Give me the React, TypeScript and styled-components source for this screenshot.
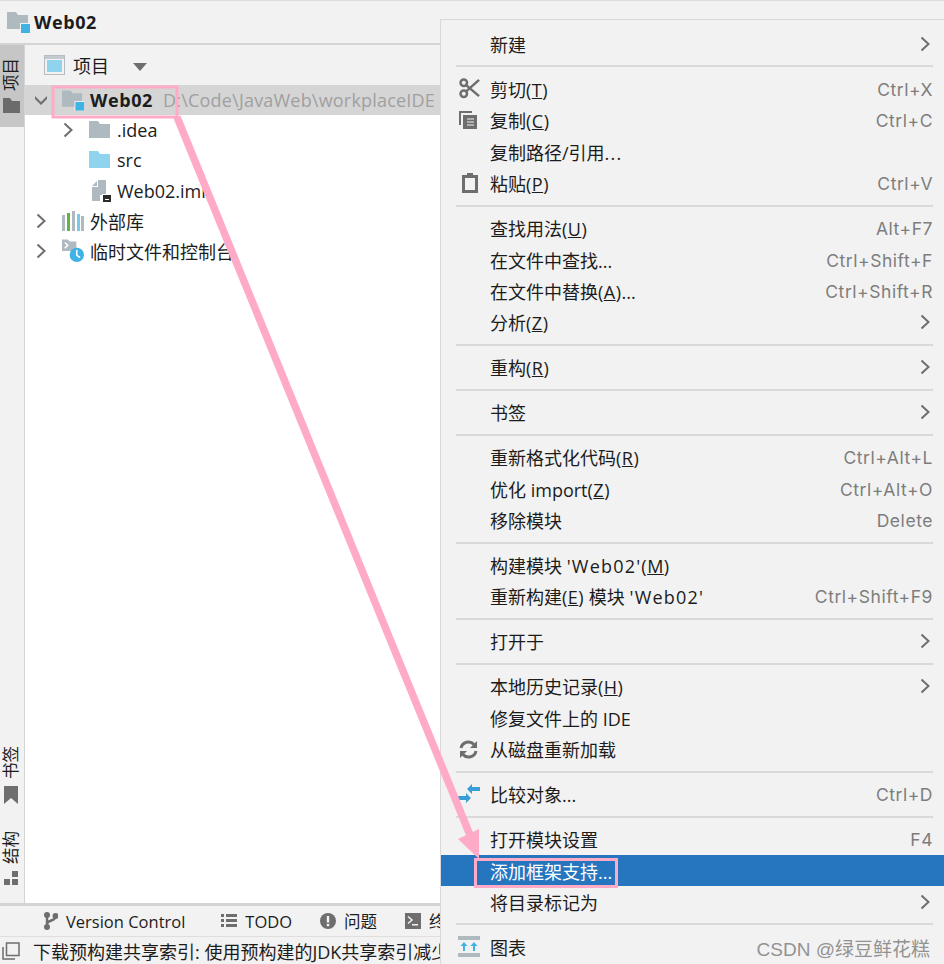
import * as React from 'react'
import styled, { createGlobalStyle } from 'styled-components'

const UI_FONT = `"Open Sans", "Noto Sans CJK SC", sans-serif`

const GlobalStyle = createGlobalStyle`
  html, body {
    margin: 0;
    padding: 0;
    background: #f2f2f2;
  }
  body {
    font-family: ${UI_FONT};
    font-size: 18px;
    color: #1c1c1c;
  }
`

const Page = styled.div`
  position: relative;
  display: flex;
  flex-direction: column;
  width: 944px;
  height: 964px;
  overflow: hidden;
  background: #f2f2f2;
`

const TitleBar = styled.div`
  display: flex;
  align-items: center;
  gap: 4px;
  height: 42px;
  padding-left: 7px;
  border-top: 1px solid #dcdcdc;
  border-bottom: 2px solid #d4d4d4;
  font-weight: 700;
  letter-spacing: 0.6px;
`

const Workspace = styled.div`
  display: flex;
  width: 441px;
  height: 858px;
  overflow: hidden;
`

const SideStrip = styled.div`
  display: flex;
  flex-direction: column;
  justify-content: space-between;
  width: 25px;
  padding-bottom: 3px;
  box-sizing: border-box;
  border-right: 1px solid #d4d4d4;
  flex-shrink: 0;
`

const StripGroup = styled.div`
  display: flex;
  flex-direction: column;
`

const StripTab = styled.div<{ $active?: boolean }>`
  display: flex;
  flex-direction: column;
  align-items: center;
  gap: 7px;
  padding: 13px 2px 14px 0;
  background: ${(p) => (p.$active ? '#c6c6c6' : 'transparent')};
`

const StripLabel = styled.span`
  writing-mode: vertical-rl;
  text-orientation: sideways;
  transform: rotate(180deg);
  font-size: 16.5px;
  line-height: 20px;
`

const ProjectPanel = styled.div`
  flex: 1;
  display: flex;
  flex-direction: column;
  background: #fff;
  min-width: 0;
`

const PanelHeader = styled.div`
  display: flex;
  align-items: center;
  height: 40px;
  padding-left: 19px;
  background: #f2f2f2;
`

const HeaderTitle = styled.span`
  margin-left: 8px;
  margin-right: 24px;
`

const DropArrow = styled.svg`
  margin-top: 3px;
`

const TreeRow = styled.div<{ $selected?: boolean; $indent: number }>`
  display: flex;
  align-items: center;
  height: 30.2px;
  padding-left: ${(p) => 10 + p.$indent * 27}px;
  background: ${(p) => (p.$selected ? '#d5d5d5' : 'transparent')};
  white-space: nowrap;
`

const ChevronSlot = styled.span`
  display: flex;
  justify-content: center;
  width: 12px;
  margin-right: 15px;
  flex-shrink: 0;
`

const TreeIcon = styled.span`
  display: flex;
  align-items: center;
  width: 22px;
  flex-shrink: 0;
`

const TreeLabel = styled.span<{ $bold?: boolean }>`
  margin-left: 6px;
  font-weight: ${(p) => (p.$bold ? 700 : 400)};
  letter-spacing: ${(p) => (p.$bold ? '0.6px' : '0')};
`

const TreePath = styled.span`
  margin-left: 10px;
  color: #a0a0a0;
  letter-spacing: 0.2px;
`

const ToolTabs = styled.div`
  display: flex;
  align-items: center;
  width: 397px;
  height: 30px;
  padding-left: 44px;
  box-sizing: content-box;
  border-top: 3px solid #d4d4d4;
  border-bottom: 1px solid #dedede;
  white-space: nowrap;
  font-size: 16.5px;
  overflow: hidden;
`

const ToolTab = styled.div<{ $gap: number }>`
  display: flex;
  align-items: center;
  gap: 8px;
  flex-shrink: 0;
  margin-right: ${(p) => p.$gap}px;
`

const StatusBar = styled.div`
  display: flex;
  align-items: center;
  gap: 13px;
  flex: 1;
  width: 439px;
  padding-left: 2px;
  white-space: nowrap;
  overflow: hidden;
`

const StatusIcon = styled.svg`
  flex-shrink: 0;
`

const Menu = styled.div`
  position: absolute;
  left: 440px;
  top: 19px;
  width: 504px;
  height: 960px;
  box-sizing: border-box;
  padding-top: 8.3px;
  background: #f2f2f2;
  border-left: 1px solid #d9d9d9;
  border-top: 1px solid #d9d9d9;
`

const MenuRow = styled.div<{ $active?: boolean }>`
  display: flex;
  align-items: center;
  height: 31.4px;
  padding: 0 11px 0 15px;
  background: ${(p) => (p.$active ? '#2675bf' : 'transparent')};
  color: ${(p) => (p.$active ? '#fff' : '#1c1c1c')};
  white-space: nowrap;
`

const MenuIcon = styled.span`
  display: flex;
  align-items: center;
  box-sizing: border-box;
  width: 34px;
  height: 24px;
  padding-left: 3px;
  flex-shrink: 0;
`

const WideIcon = styled.svg`
  margin-left: -1px;
`

const MenuLabel = styled.span`
  white-space: pre;
`

const Shortcut = styled.span`
  margin-left: auto;
  margin-top: 1px;
  color: #7d7d7d;
  font-family: Inter, sans-serif;
  font-size: 17.5px;
  letter-spacing: 0.55px;
`

const SubmenuArrow = styled.span`
  display: flex;
  margin-left: auto;
  margin-right: 2px;
`

const MenuSeparator = styled.div`
  height: 13.6px;
  margin: 0 11px 0 15px;
  display: flex;
  align-items: center;

  &::after {
    content: '';
    flex: 1;
    height: 2px;
    background: #d9d9d9;
  }
`

const Mnemonic = styled.span`
  letter-spacing: 0.5px;
`

const Spaced = styled.span`
  letter-spacing: 1.2px;
`

const Annotation = styled.svg`
  position: absolute;
  left: 0;
  top: 0;
  pointer-events: none;
`

const Watermark = styled.span`
  position: absolute;
  right: 14px;
  top: 934px;
  font-family: 'Liberation Sans', 'Noto Sans CJK SC', sans-serif;
  font-size: 19px;
  color: rgba(120, 120, 120, 0.8);
  white-space: nowrap;
`

const GRAY = '#6e6e6e'
const FOLDER = '#afb9c0'
const BLUE = '#3fb3e3'
const PINK = '#ffabc8'

const Chevron = ({ down, color = GRAY }: { down?: boolean; color?: string }) => (
  <svg width="12" height="16" viewBox="0 0 12 16" fill="none" stroke={color} strokeWidth="2">
    {down ? <path d="M-1 4.5 L6 11.5 L13 4.5" /> : <path d="M2.5 1.5 L9.5 8 L2.5 14.5" />}
  </svg>
)

const Folder = ({ color = FOLDER }: { color?: string }) => (
  <svg width="22" height="18" viewBox="0 0 22 18" fill={color}>
    <path d="M0 0 H9 L11 3 H21 V17 H0 Z" />
  </svg>
)

const ModuleIcon = () => (
  <svg width="23" height="21" viewBox="0 0 23 21">
    <path d="M0 0 H9 L11 3 H21 V17 H0 Z" fill={FOLDER} />
    <rect x="13" y="11" width="10" height="10" fill="#f2f2f2" />
    <rect x="14" y="12" width="9" height="9" fill={BLUE} />
  </svg>
)

const ImlIcon = () => (
  <svg width="22" height="22" viewBox="-3 0 22 22">
    <path d="M6 0 H14 V15 H8 V21 H0 V7 H6 Z" fill={FOLDER} />
    <path d="M5 1 V6 H0 Z" fill={FOLDER} />
    <rect x="10" y="14" width="9" height="8" fill="#fff" />
    <rect x="11" y="15" width="8" height="7" fill="#2b2b2b" />
    <rect x="13" y="19" width="4" height="1" fill="#fff" />
  </svg>
)

const LibraryIcon = () => (
  <svg width="22" height="20" viewBox="0 0 22 20">
    <rect x="0" y="4" width="3" height="16" fill={FOLDER} />
    <rect x="5" y="2" width="3" height="18" fill="#62b543" />
    <rect x="10" y="0" width="3" height="20" fill={FOLDER} />
    <rect x="15" y="3" width="3" height="17" fill={BLUE} opacity="0.7" />
    <rect x="19" y="5" width="3" height="15" fill={FOLDER} />
  </svg>
)

const ScratchIcon = () => (
  <svg width="23" height="24" viewBox="0 0 23 24">
    <path d="M0 0 H6 L8 2 H15 V12 H0 Z" fill={FOLDER} />
    <path d="M3 3 L6 6 L3 9" stroke="#fff" strokeWidth="1.5" fill="none" />
    <circle cx="15.5" cy="16" r="7.5" fill={BLUE} />
    <path d="M15.5 11 V16.5 L19 19" stroke="#fff" strokeWidth="1.6" fill="none" />
  </svg>
)

const ViewIcon = () => (
  <svg width="21" height="20" viewBox="0 0 21 20">
    <rect x="0.5" y="0.5" width="20" height="19" fill="#f2f2f2" stroke="#b4bcc2" />
    <rect x="1" y="1" width="19" height="3" fill="#c4cbd0" />
    <rect x="3" y="5" width="15" height="12" fill="#8fd3ee" />
  </svg>
)

const SideFolder = () => (
  <svg width="17" height="15" viewBox="0 0 17 15" fill="#6b6b6b">
    <path d="M0 0 H7 L9 3 H17 V15 H0 Z" />
  </svg>
)

const BookmarkIcon = () => (
  <svg width="14" height="18" viewBox="0 0 14 18" fill="#6e6e6e">
    <path d="M0 0 H14 V18 L7 12 L0 18 Z" />
  </svg>
)

const StructureIcon = () => (
  <svg width="15" height="15" viewBox="0 0 15 15" fill="#6e6e6e">
    <rect x="8" y="0" width="6" height="6" />
    <rect x="0" y="8" width="6" height="6" />
    <rect x="8" y="8" width="6" height="6" />
  </svg>
)

const BranchIcon = () => (
  <svg width="14" height="18" viewBox="0 0 14 18" fill="none" stroke="#6e6e6e" strokeWidth="2.4">
    <circle cx="3" cy="3" r="1.8" fill="#6e6e6e" />
    <circle cx="3" cy="15" r="1.8" fill="#6e6e6e" />
    <circle cx="11.5" cy="4" r="1.8" fill="#6e6e6e" />
    <path d="M3 3 V15 M11.5 5 C11.5 9 3 8 3 12" />
  </svg>
)

const ListIcon = () => (
  <svg width="16" height="14" viewBox="0 0 16 14" fill="#6e6e6e">
    <rect x="0" y="0" width="3" height="3" />
    <rect x="5" y="0" width="11" height="3" />
    <rect x="0" y="5" width="3" height="3" />
    <rect x="5" y="5" width="11" height="3" />
    <rect x="0" y="10" width="3" height="3" />
    <rect x="5" y="10" width="11" height="3" />
  </svg>
)

const ProblemIcon = () => (
  <svg width="16" height="16" viewBox="0 0 16 16">
    <circle cx="8" cy="8" r="8" fill="#6e6e6e" />
    <rect x="6.8" y="3" width="2.4" height="6.5" fill="#f2f2f2" />
    <rect x="6.8" y="10.8" width="2.4" height="2.4" fill="#f2f2f2" />
  </svg>
)

const TerminalIcon = () => (
  <svg width="16" height="16" viewBox="0 0 16 16">
    <rect width="16" height="16" fill="#6e6e6e" />
    <path d="M3 3.5 L7 7 L3 10.5" stroke="#f2f2f2" strokeWidth="1.5" fill="none" />
    <rect x="7" y="11" width="6" height="1.5" fill="#f2f2f2" />
  </svg>
)

const ProgressIcon = () => (
  <StatusIcon width="18" height="18" viewBox="0 0 18 18" fill="none" stroke="#6e6e6e" strokeWidth="1.5">
    <rect x="4.5" y="1" width="12.5" height="12.5" />
    <path d="M1 5 V17 H13" />
  </StatusIcon>
)

const ScissorsIcon = () => (
  <svg width="21" height="21" viewBox="0 0 22 22" fill="none" stroke={GRAY} strokeWidth="2.6">
    <circle cx="5" cy="5" r="3.4" />
    <circle cx="5" cy="16.5" r="3.4" />
    <path d="M7.5 7.5 L21 19 M7.5 14 L21 2" />
  </svg>
)

const CopyIcon = () => (
  <svg width="19" height="19" viewBox="0 0 19 19">
    <path d="M0 0 H13 V2 H2 V14 H0 Z" fill={GRAY} />
    <path d="M4 4 H18 V18 H4 Z" fill={GRAY} />
    <path d="M8 8 H15 M8 11 H15 M8 14 H15" stroke="#f2f2f2" strokeWidth="1.2" />
  </svg>
)

const PasteIcon = () => (
  <svg width="19" height="20" viewBox="-3 0 19 20">
    <path d="M0 2 H5 V0 H11 V2 H16 V20 H0 Z" fill={GRAY} />
    <rect x="3" y="5" width="10" height="12" fill="#f2f2f2" />
  </svg>
)

const ReloadIcon = () => (
  <svg width="19" height="19" viewBox="0 0 19 19" fill="none" stroke={GRAY} strokeWidth="3">
    <path d="M2 8 A7.5 7.5 0 0 1 15 4.5" />
    <path d="M17 11 A7.5 7.5 0 0 1 4 14.5" />
    <path d="M11 8 H18 V1 Z" fill={GRAY} stroke="none" />
    <path d="M8 11 H1 V18 Z" fill={GRAY} stroke="none" />
  </svg>
)

const CompareIcon = () => (
  <WideIcon width="22" height="22" viewBox="0 0 22 22" fill="#389fd6">
    <path d="M9 6 L14 1 V4 H22 V8 H14 V11 Z" />
    <path d="M13 15 L8 10 V13 H0 V17 H8 V20 Z" />
  </WideIcon>
)

const DiagramIcon = () => (
  <WideIcon width="22" height="21" viewBox="0 0 22 21">
    <rect x="0" y="0" width="22" height="4" fill={FOLDER} />
    <rect x="0" y="17" width="22" height="4" fill={FOLDER} />
    <path d="M6 6 L9.5 10 H7 V15 H5 V10 H2.5 Z" fill={BLUE} />
    <path d="M16 6 L19.5 10 H17 V15 H15 V10 H12.5 Z" fill={BLUE} />
  </WideIcon>
)

type TMenuItem = {
  label?: React.ReactNode
  shortcut?: string
  submenu?: boolean
  icon?: React.ReactNode
  active?: boolean
}

const Key = ({ children }: { children: string }) => (
  <Mnemonic>
    (<u>{children}</u>)
  </Mnemonic>
)

const SEP: TMenuItem = {}

const menuItems: TMenuItem[] = [
  { label: '新建', submenu: true },
  SEP,
  { label: <>剪切<Key>T</Key></>, shortcut: 'Ctrl+X', icon: <ScissorsIcon /> },
  { label: <>复制<Key>C</Key></>, shortcut: 'Ctrl+C', icon: <CopyIcon /> },
  { label: <>复制路径/引用<Spaced>...</Spaced></> },
  { label: <>粘贴<Key>P</Key></>, shortcut: 'Ctrl+V', icon: <PasteIcon /> },
  SEP,
  { label: <>查找用法<Key>U</Key></>, shortcut: 'Alt+F7' },
  { label: '在文件中查找...', shortcut: 'Ctrl+Shift+F' },
  { label: <>在文件中替换<Key>A</Key>...</>, shortcut: 'Ctrl+Shift+R' },
  { label: <>分析<Key>Z</Key></>, submenu: true },
  SEP,
  { label: <>重构<Key>R</Key></>, submenu: true },
  SEP,
  { label: '书签', submenu: true },
  SEP,
  { label: <>重新格式化代码<Key>R</Key></>, shortcut: 'Ctrl+Alt+L' },
  { label: <>优化 import<Key>Z</Key></>, shortcut: 'Ctrl+Alt+O' },
  { label: '移除模块', shortcut: 'Delete' },
  SEP,
  { label: <>构建模块 <Spaced>'Web02'</Spaced><Key>M</Key></> },
  { label: <>重新构建<Key>E</Key> 模块 <Spaced>'Web02'</Spaced></>, shortcut: 'Ctrl+Shift+F9' },
  SEP,
  { label: '打开于', submenu: true },
  SEP,
  { label: <>本地历史记录<Key>H</Key></>, submenu: true },
  { label: '修复文件上的 IDE' },
  { label: '从磁盘重新加载', icon: <ReloadIcon /> },
  SEP,
  { label: '比较对象...', shortcut: 'Ctrl+D', icon: <CompareIcon /> },
  SEP,
  { label: '打开模块设置', shortcut: 'F4' },
  { label: '添加框架支持...', active: true },
  { label: '将目录标记为', submenu: true },
  SEP,
  { label: '图表', icon: <DiagramIcon /> },
]

const App: React.FC = () => (
  <Page>
    <GlobalStyle />
    <TitleBar>
      <ModuleIcon />
      Web02
    </TitleBar>
    <Workspace>
      <SideStrip>
        <StripGroup>
          <StripTab $active>
            <StripLabel>项目</StripLabel>
            <SideFolder />
          </StripTab>
        </StripGroup>
        <StripGroup>
          <StripTab>
            <StripLabel>书签</StripLabel>
            <BookmarkIcon />
          </StripTab>
          <StripTab>
            <StripLabel>结构</StripLabel>
            <StructureIcon />
          </StripTab>
        </StripGroup>
      </SideStrip>
      <ProjectPanel>
        <PanelHeader>
          <ViewIcon />
          <HeaderTitle>项目</HeaderTitle>
          <DropArrow width="14" height="8" viewBox="0 0 14 8" fill="#6e6e6e">
            <path d="M0 0 H14 L7 8 Z" />
          </DropArrow>
        </PanelHeader>
        <TreeRow $selected $indent={0}>
          <ChevronSlot><Chevron down /></ChevronSlot>
          <TreeIcon><ModuleIcon /></TreeIcon>
          <TreeLabel $bold>Web02</TreeLabel>
          <TreePath>D:\Code\JavaWeb\workplaceIDE</TreePath>
        </TreeRow>
        <TreeRow $indent={1}>
          <ChevronSlot><Chevron /></ChevronSlot>
          <TreeIcon><Folder /></TreeIcon>
          <TreeLabel>.idea</TreeLabel>
        </TreeRow>
        <TreeRow $indent={1}>
          <ChevronSlot />
          <TreeIcon><Folder color="#8fd3ee" /></TreeIcon>
          <TreeLabel>src</TreeLabel>
        </TreeRow>
        <TreeRow $indent={1}>
          <ChevronSlot />
          <TreeIcon><ImlIcon /></TreeIcon>
          <TreeLabel>Web02.iml</TreeLabel>
        </TreeRow>
        <TreeRow $indent={0}>
          <ChevronSlot><Chevron /></ChevronSlot>
          <TreeIcon><LibraryIcon /></TreeIcon>
          <TreeLabel>外部库</TreeLabel>
        </TreeRow>
        <TreeRow $indent={0}>
          <ChevronSlot><Chevron /></ChevronSlot>
          <TreeIcon><ScratchIcon /></TreeIcon>
          <TreeLabel>临时文件和控制台</TreeLabel>
        </TreeRow>
      </ProjectPanel>
    </Workspace>
    <ToolTabs>
      <ToolTab $gap={36}><BranchIcon />Version Control</ToolTab>
      <ToolTab $gap={28}><ListIcon />TODO</ToolTab>
      <ToolTab $gap={28}><ProblemIcon />问题</ToolTab>
      <ToolTab $gap={0}><TerminalIcon />终</ToolTab>
    </ToolTabs>
    <StatusBar>
      <ProgressIcon />
      <span>下载预构建共享索引: 使用预构建的JDK共享索引减少</span>
    </StatusBar>
    <Menu>
      {menuItems.map((item, i) =>
        item === SEP ? (
          <MenuSeparator key={i} />
        ) : (
          <MenuRow key={i} $active={item.active}>
            <MenuIcon>{item.icon}</MenuIcon>
            <MenuLabel>{item.label}</MenuLabel>
            {item.shortcut && <Shortcut>{item.shortcut}</Shortcut>}
            {item.submenu && (
              <SubmenuArrow><Chevron /></SubmenuArrow>
            )}
          </MenuRow>
        )
      )}
    </Menu>
    <Annotation width="944" height="964" viewBox="0 0 944 964">
      <rect x="53" y="87" width="124" height="30" fill="none" stroke={PINK} strokeWidth="3" />
      <rect x="475.5" y="859.5" width="141" height="27" fill="none" stroke={PINK} strokeWidth="3" />
      <path d="M177 117 L472 840" stroke={PINK} strokeWidth="7.5" fill="none" />
      <path d="M458 839 L479 829 L479 859 Z" fill={PINK} />
    </Annotation>
    <Watermark>CSDN @绿豆鲜花糕</Watermark>
  </Page>
)

export default App
